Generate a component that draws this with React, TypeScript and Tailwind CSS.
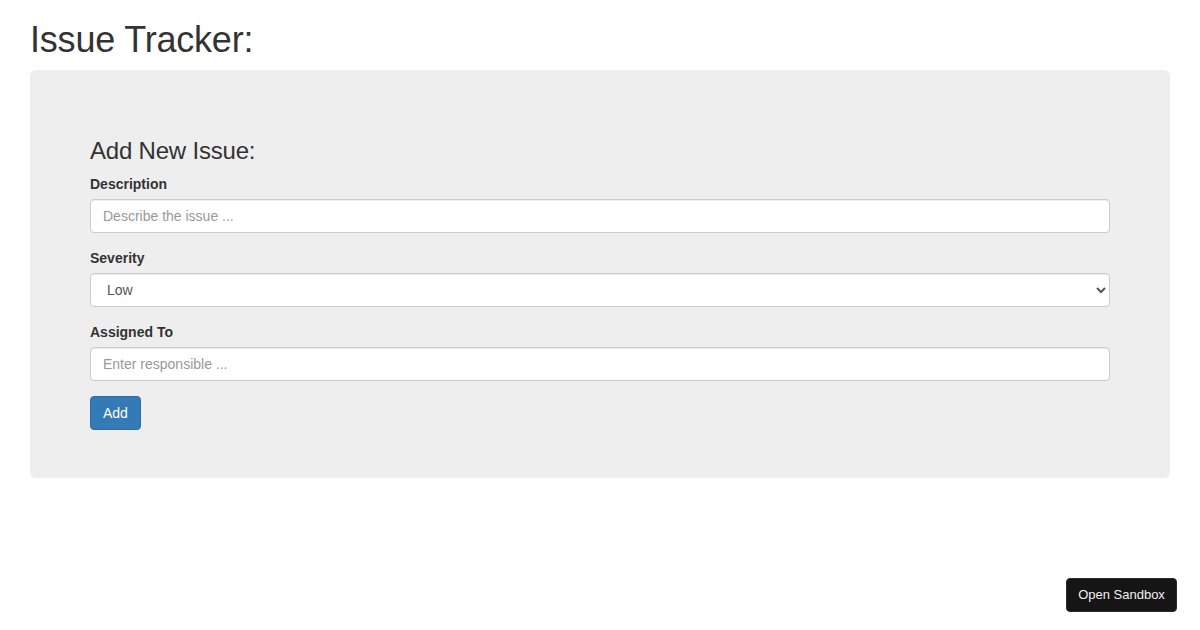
import React from "react";

export default function App() {
  const font = { fontFamily: '"Liberation Sans", Arial, sans-serif' };
  return (
    <div className="min-h-[630px] bg-white text-[#333] text-[14px] leading-[20px]" style={font}>
      <div className="px-[30px]">
        <h1 className="mt-[20px] mb-[10px] text-[36px] leading-[1.1] font-medium tracking-[-0.2px]">Issue Tracker:</h1>
        <div className="bg-[#eeeeee] rounded-[6px] px-[60px] pt-[48px] pb-[48px]">
          <h3 className="mt-[20px] mb-[10px] text-[24px] leading-[1.1] font-medium tracking-[-0.2px]">Add New Issue:</h3>
          <form onSubmit={(e) => e.preventDefault()}>
            <div className="mb-[15px]">
              <label className="block mb-[5px] font-bold">Description</label>
              <input
                type="text"
                placeholder="Describe the issue ..."
                className="block w-full h-[34px] px-[12px] py-[6px] bg-white border border-[#ccc] rounded-[4px] text-[#555] placeholder:text-[#999] shadow-[inset_0_1px_1px_rgba(0,0,0,0.075)] outline-none"
              />
            </div>
            <div className="mb-[15px]">
              <label className="block mb-[5px] font-bold">Severity</label>
              <select
                defaultValue="Low"
                className="block w-full h-[34px] px-[12px] py-[6px] bg-white border border-[#ccc] rounded-[4px] text-[#555] shadow-[inset_0_1px_1px_rgba(0,0,0,0.075)] outline-none"
              >
                <option>Low</option>
                <option>Medium</option>
                <option>High</option>
              </select>
            </div>
            <div className="mb-[15px]">
              <label className="block mb-[5px] font-bold">Assigned To</label>
              <input
                type="text"
                placeholder="Enter responsible ..."
                className="block w-full h-[34px] px-[12px] py-[6px] bg-white border border-[#ccc] rounded-[4px] text-[#555] placeholder:text-[#999] shadow-[inset_0_1px_1px_rgba(0,0,0,0.075)] outline-none"
              />
            </div>
            <button
              type="submit"
              className="h-[34px] px-[12px] py-[6px] bg-[#337ab7] border border-[#2e6da4] rounded-[4px] text-white text-[14px] leading-[20px]"
            >
              Add
            </button>
          </form>
        </div>
      </div>
      <div className="fixed right-[23px] bottom-[18px] w-[111px] h-[34px] flex items-center justify-center bg-[#151515] rounded-[4px] border border-[#2a2a2a] text-[13px] text-[#f0f0f0]">
        Open Sandbox
      </div>
    </div>
  );
}
